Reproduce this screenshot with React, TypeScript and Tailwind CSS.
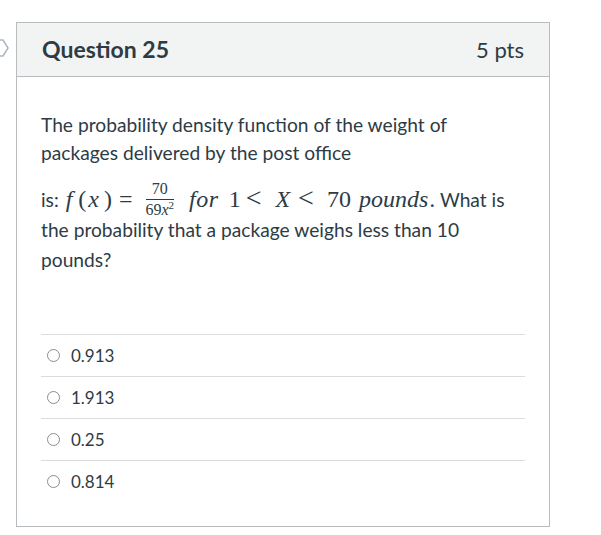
import React from "react";

const answers = ["0.913", "1.913", "0.25", "0.814"];

const Radio = () => (
  <span className="inline-block w-[13px] h-[13px] rounded-full border border-[#8c8c8c] bg-white shrink-0" />
);

const serif = { fontFamily: '"Liberation Serif", "DejaVu Serif", serif' };

const M = ({ children, className = "" }: { children: React.ReactNode; className?: string }) => (
  <span className={`italic text-[24px] leading-none ${className}`} style={serif}>
    {children}
  </span>
);

const R = ({ children, className = "" }: { children: React.ReactNode; className?: string }) => (
  <span className={`text-[24px] leading-none ${className}`} style={serif}>
    {children}
  </span>
);

export default function App() {
  return (
    <div className="relative w-[601px] h-[535px] bg-white overflow-hidden" style={{ fontFamily: "Lato, 'Liberation Sans', sans-serif" }}>
      {/* flag marker on the left */}
      <svg className="absolute left-0 top-[38px]" width="12" height="20" viewBox="0 0 12 20">
        <path d="M-6 2 L3 2 L8 10 L3 18 L-6 18" fill="none" stroke="#a9b8c4" strokeWidth="1.5" strokeLinejoin="round" />
      </svg>

      <div className="ml-[16px] mt-[22px] w-[534px] border border-[#b8bcbf] text-[#2d3b45]">
        {/* --- header --- */}
        <div className="h-[54px] flex items-center justify-between pl-[25px] pr-[25px] bg-[#f2f3f3] border-b border-[#b8bcbf]">
          <h2 className="text-[23px] font-bold">Question 25</h2>
          <span className="text-[22px]">5 pts</span>
        </div>

        {/* --- question text --- */}
        <div className="pt-[34px] px-[24px] text-[19.2px]">
          <p className="leading-[28px]">
            The probability density function of the weight of
            <br />
            packages delivered by the post office
          </p>
          <p className="mt-[18px] leading-[30px]">
            is: <M className="ml-[2px]">f</M>
            <R className="ml-[6px]">(</R>
            <M className="mx-[2px]">x</M>
            <R className="ml-[3px]">)</R>
            <R className="ml-[7px]">=</R>
            <span className="inline-flex flex-col items-center align-middle ml-[10px] px-[3px] -my-[10px] relative top-[-3px] leading-none" style={serif}>
              <span className="text-[16px]">70</span>
              <span className="block w-full h-px bg-[#2d3b45] my-[2px]" />
              <span className="text-[16px]">
                69<i>x</i>
                <sup className="text-[11px]">2</sup>
              </span>
            </span>
            <M className="ml-[12px] tracking-[0.5px]">for</M>
            <R className="ml-[10px]">1</R>
            <R className="inline-block -my-[4px] ml-[5px] text-[28px]">&lt;</R>
            <M className="ml-[14px]">X</M>
            <R className="inline-block -my-[4px] ml-[8px] text-[28px]">&lt;</R>
            <R className="ml-[13px]">70</R>
            <M className="ml-[8px]">pounds</M>
            <R className="ml-[1px]">.</R> What is
            <br />
            the probability that a package weighs less than 10
            <br />
            pounds?
          </p>
        </div>

        {/* --- answers --- */}
        <div className="mt-[59px] mx-[24px] mb-[24px]">
          {answers.map((a) => (
            <div key={a} className="h-[42px] flex items-center gap-[11px] pl-[6px] border-t border-[#dcdcdc] text-[17px]">
              <Radio />
              <span>{a}</span>
            </div>
          ))}
        </div>
      </div>
    </div>
  );
}
